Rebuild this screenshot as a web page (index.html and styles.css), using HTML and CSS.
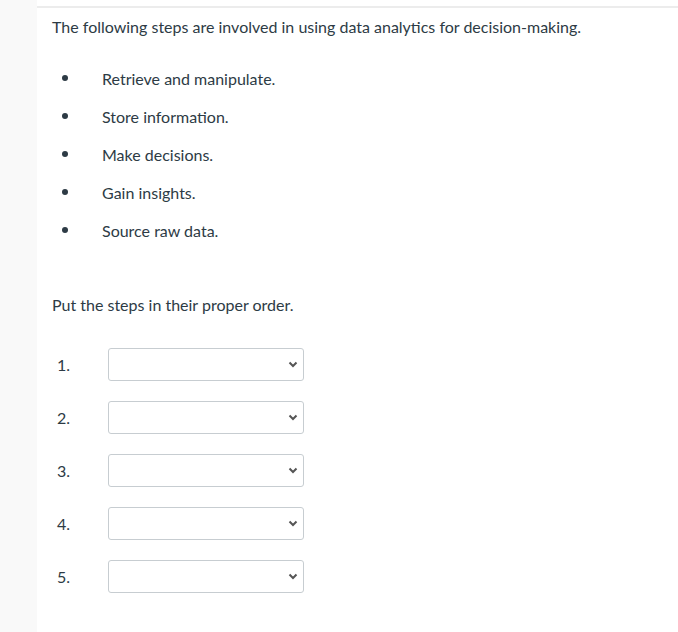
FILE: index.html
```html
<!DOCTYPE html>
<html>
<head>
<meta charset="utf-8">
<link rel="stylesheet" href="styles.css">
</head>
<body>
<div class="page">
  <div class="side"></div>
  <main class="main">
    <div class="content">
      <p class="title">The following steps are involved in using data analytics for decision-making.</p>
      <ul class="steps">
        <li><span class="dot"></span><span>Retrieve and manipulate.</span></li>
        <li><span class="dot"></span><span>Store information.</span></li>
        <li><span class="dot"></span><span>Make decisions.</span></li>
        <li><span class="dot"></span><span>Gain insights.</span></li>
        <li><span class="dot"></span><span>Source raw data.</span></li>
      </ul>
      <p class="prompt">Put the steps in their proper order.</p>
      <div class="rows">
        <div class="row"><span class="num">1.</span><div class="select"><svg width="10" height="7" viewBox="0 0 10 7"><path d="M1.5 1.5 L5 5 L8.5 1.5" fill="none" stroke="#555" stroke-width="2"/></svg></div></div>
        <div class="row"><span class="num">2.</span><div class="select"><svg width="10" height="7" viewBox="0 0 10 7"><path d="M1.5 1.5 L5 5 L8.5 1.5" fill="none" stroke="#555" stroke-width="2"/></svg></div></div>
        <div class="row"><span class="num">3.</span><div class="select"><svg width="10" height="7" viewBox="0 0 10 7"><path d="M1.5 1.5 L5 5 L8.5 1.5" fill="none" stroke="#555" stroke-width="2"/></svg></div></div>
        <div class="row"><span class="num">4.</span><div class="select"><svg width="10" height="7" viewBox="0 0 10 7"><path d="M1.5 1.5 L5 5 L8.5 1.5" fill="none" stroke="#555" stroke-width="2"/></svg></div></div>
        <div class="row"><span class="num">5.</span><div class="select"><svg width="10" height="7" viewBox="0 0 10 7"><path d="M1.5 1.5 L5 5 L8.5 1.5" fill="none" stroke="#555" stroke-width="2"/></svg></div></div>
      </div>
    </div>
  </main>
</div>
</body>
</html>
```
FILE: styles.css
```css
html, body {
  margin: 0;
  padding: 0;
  background: #ffffff;
}
body {
  font-family: Lato, "Liberation Sans", sans-serif;
  font-size: 16px;
  color: #2d3b45;
}
.page {
  display: flex;
  min-height: 632px;
}
.side {
  width: 37px;
  flex: 0 0 37px;
  background: #f9f9f9;
}
.main {
  flex: 1;
  padding-top: 6px;
}
.content {
  border-top: 2px solid #ececec;
  padding: 7px 0 0 15px;
}
.title {
  margin: 0;
  line-height: 24px;
}
.steps {
  list-style: none;
  margin: 20px 0 0 0;
  padding: 0;
}
.steps li {
  display: flex;
  align-items: center;
  height: 38px;
}
.dot {
  width: 6px;
  height: 6px;
  border-radius: 50%;
  background: #2d3b45;
  margin-left: 10px;
  margin-right: 34px;
}
.prompt {
  margin: 44px 0 0 0;
  line-height: 24px;
}
.rows {
  display: flex;
  flex-direction: column;
  gap: 20px;
  margin-top: 31px;
}
.row {
  display: flex;
  align-items: center;
}
.num {
  width: 56px;
  padding-left: 5px;
  box-sizing: border-box;
}
.select {
  width: 196px;
  height: 33px;
  box-sizing: border-box;
  border: 1px solid #c7cdd1;
  border-radius: 3px;
  display: flex;
  align-items: center;
  justify-content: flex-end;
  padding-right: 5px;
}
```
